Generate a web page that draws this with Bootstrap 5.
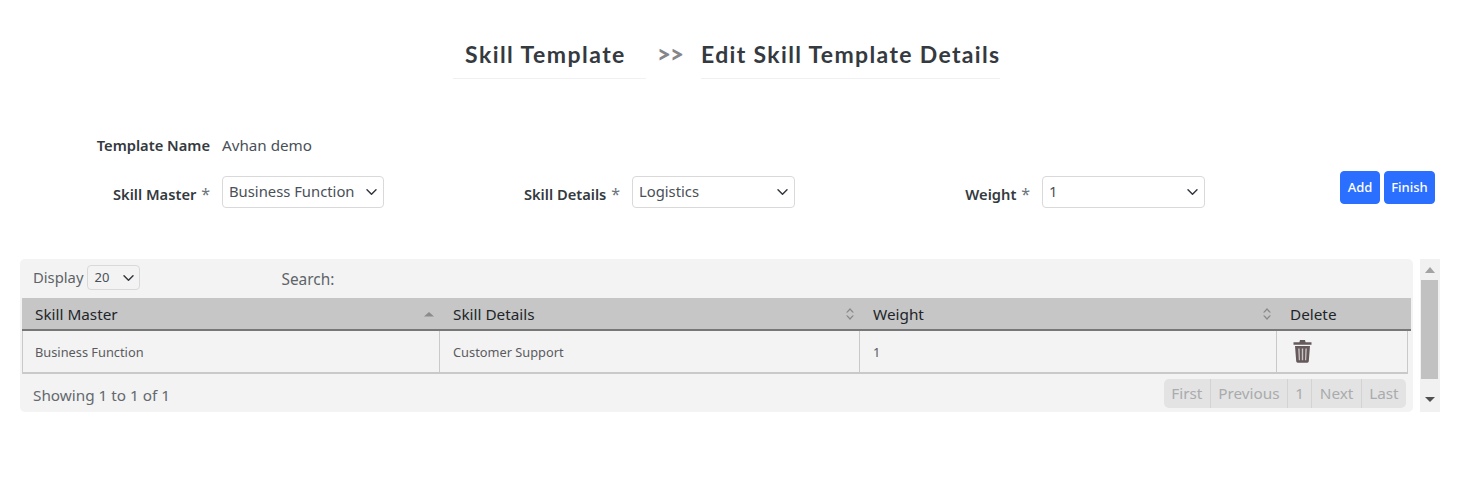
<!DOCTYPE html>
<html lang="en">
<head>
<meta charset="utf-8">
<title>Edit Skill Template Details</title>
<link href="https://cdn.jsdelivr.net/npm/bootstrap@5.3.0/dist/css/bootstrap.min.css" rel="stylesheet">
<style>
html,body{height:485px;overflow:hidden;background:#fff}
body{font-family:"Noto Sans",sans-serif;color:#495057;font-size:14px}
.crumbs{padding-top:37px;height:121px;padding-left:453px}
.crumb{font-family:"Lato",sans-serif;font-weight:700;font-size:23px;letter-spacing:1.34px;color:#343a40;border-bottom:1px solid #f1f1f4;height:42px;line-height:34px;white-space:nowrap}
.crumb-a{width:193px;padding-left:12px;letter-spacing:1.45px}
.crumb-b{width:299px}
.crumb-sep{font-family:"Lato",sans-serif;font-weight:900;font-size:24px;letter-spacing:-1px;color:#85858a;width:55px;padding-left:11px;line-height:34px}
.form-area{padding:8px 0 0 20px;height:138px}
.name-row{height:32px}
.lbl{font-weight:600;font-size:14.7px;color:#343a40;width:190px;text-align:right;white-space:nowrap}
.req{font-weight:400;color:#6c757d;font-size:16px;margin-left:1px}
.val{margin-left:12px;font-size:15.2px;color:#495057}
.fields-row{height:40px;margin-top:15px}
.fld{display:flex;align-items:center}
.fld .lbl{padding-top:4px}
.pick{font-size:14.8px;color:#495057;height:32px;padding:0 24px 2px 6px;border:1px solid #d9d9d9;border-radius:4px;margin-left:12px;background-position:right 4px center;background-size:15px 12px}
.w-a{width:162px}.w-b{width:163px}
.gap-a{width:36px}.gap-b{width:35px}
.lbl-b{width:200px}.lbl-c{width:200px}
.act{margin-left:135px;margin-top:-5px;gap:4px}
.act .btn{font-size:13px;font-weight:500;height:33px;padding:0 6px;border-radius:4px;background:#2a6fff;border-color:#2a6fff;line-height:31px}
.w-add{width:40px}.w-fin{width:51px}
.panel-wrap{padding-left:20px;gap:7px}
.panel{width:1393px;height:153px;background:#f3f3f3;border-radius:5px;padding:0 2px;overflow:hidden}
.topbar{height:39px;color:#5d6368;font-size:14.8px;padding:6px 0 0 11px;line-height:24px}
.mini{font-size:13px;height:25px;width:53px;padding:0 18px 0 6px;border:1px solid #d9d9d9;border-radius:4px;background-color:#f3f3f3;background-position:right 3px center;background-size:15px 12px;margin-left:4px;color:#495057}
.srch{margin-left:141px;padding-top:3px;font-size:15.4px}
.dtable{table-layout:fixed;border-collapse:separate;border-spacing:0;margin:0}
.dhead{width:1389px;background:#c6c6c6;color:#212529;font-size:15.3px}
.dhead th{font-weight:400;height:33px;padding:1px 12px 0 13px;border-bottom:2px solid #77777a;position:relative}
.dbody{width:1386px;font-size:12.8px;color:#5b5b5f}
.dbody td{height:43px;padding:2px 12px 0 13px;border-right:1px solid #c9c9c9;border-bottom:2px solid #c9c9c9;vertical-align:middle}
.dbody td:first-child{border-left:1px solid #c9c9c9;padding-left:12px}
.c1{width:418px}.c2{width:420px}.c3{width:417px}
.sorter{position:absolute;right:5px;top:9px;width:10px;height:14px}
.dhead th:first-child .sorter{right:6px}
.foot{height:38px;padding:5px 5px 0 11px;font-size:15.3px;color:#64696e}
.foot-text{padding-top:5px}
.pgr{height:29px;border-radius:5px;background:#e3e3e3;color:#a9abad;font-size:15.3px;overflow:hidden}
.pgr span{padding:0 7.4px;line-height:29px;border-left:1px solid #d3d3d3}
.pgr span:first-child{border-left:0}
.track{width:20px;height:153px;background:#f1f1f1;padding:0 2px 0 1px}
.arrow{height:21px}
.arrow-low{height:33px;padding-top:8px}
.thumb{height:99px;background:#c1c1c1}
.trash{margin-top:-2px}
</style>
</head>
<body>
<div class="crumbs d-flex">
  <div class="crumb crumb-a">Skill Template</div>
  <div class="crumb-sep">&gt;&gt;</div>
  <div class="crumb crumb-b">Edit Skill Template Details</div>
</div>
<div class="form-area">
  <div class="name-row d-flex align-items-center">
    <div class="lbl">Template Name</div>
    <div class="val">Avhan demo</div>
  </div>
  <div class="fields-row d-flex align-items-start">
    <div class="fld">
      <div class="lbl">Skill Master <span class="req">*</span></div>
      <select class="form-select pick w-a"><option>Business Function</option></select>
    </div>
    <div class="gap-a"></div>
    <div class="fld">
      <div class="lbl lbl-b">Skill Details <span class="req">*</span></div>
      <select class="form-select pick w-b"><option>Logistics</option></select>
    </div>
    <div class="gap-b"></div>
    <div class="fld">
      <div class="lbl lbl-c">Weight <span class="req">*</span></div>
      <select class="form-select pick w-b"><option>1</option></select>
    </div>
    <div class="act d-flex">
      <button type="button" class="btn btn-primary w-add">Add</button>
      <button type="button" class="btn btn-primary w-fin">Finish</button>
    </div>
  </div>
</div>
<div class="panel-wrap d-flex">
  <div class="panel">
    <div class="topbar d-flex align-items-start">
      <span>Display</span>
      <select class="form-select mini"><option>20</option></select>
      <span class="srch">Search:</span>
    </div>
    <table class="dtable dhead">
      <colgroup><col class="c1"><col class="c2"><col class="c3"><col></colgroup>
      <thead><tr>
        <th>Skill Master<svg class="sorter" viewBox="0 0 10 14"><path d="M0 9.500 5 5l5 4.500z" fill="#8b8b8b"/></svg></th>
        <th>Skill Details<svg class="sorter" viewBox="0 0 10 14"><path d="M1 5.500 5 1l4 4.500H7.300L5 3 2.700 5.500zM1 8.500l4 4.500 4-4.500H7.300L5 11 2.700 8.500z" fill="#8a8a8a"/></svg></th>
        <th>Weight<svg class="sorter" viewBox="0 0 10 14"><path d="M1 5.500 5 1l4 4.500H7.300L5 3 2.700 5.500zM1 8.500l4 4.500 4-4.500H7.300L5 11 2.700 8.500z" fill="#8a8a8a"/></svg></th>
        <th>Delete</th>
      </tr></thead>
    </table>
    <table class="dtable dbody">
      <colgroup><col class="c1"><col class="c2"><col class="c3"><col></colgroup>
      <tbody><tr>
        <td>Business Function</td>
        <td>Customer Support</td>
        <td>1</td>
        <td class="py-0 ps-3"><svg width="19" height="24" viewBox="0 0 19 24" class="d-block trash"><path fill="#66595c" d="M7 1h5l.6 2.200h5.900v2.600H.5V3.200h5.900zM2 7h15l-1.200 15.300a1.500 1.500 0 0 1-1.500 1.400H4.700a1.500 1.500 0 0 1-1.500-1.400z"/><path fill="#c9c5c6" d="M5.200 9.500h1.400l.4 11.800H5.800zM8.800 9.500h1.400v11.800H8.800zM12.400 9.500h1.400l-.6 11.800h-1.200z"/></svg></td>
      </tr></tbody>
    </table>
    <div class="foot d-flex justify-content-between align-items-start">
      <span class="foot-text">Showing 1 to 1 of 1</span>
      <div class="pgr d-flex"><span>First</span><span>Previous</span><span>1</span><span>Next</span><span>Last</span></div>
    </div>
  </div>
  <div class="track">
    <div class="arrow d-flex align-items-center justify-content-center"><svg width="10" height="6" viewBox="0 0 10 6"><path d="M5 0l5 6H0z" fill="#a3a3a3"/></svg></div>
    <div class="thumb"></div>
    <div class="arrow-low d-flex align-items-center justify-content-center"><svg width="10" height="5" viewBox="0 0 10 5"><path d="M0 0h10L5 5z" fill="#505050"/></svg></div>
  </div>
</div>
<script src="https://cdn.jsdelivr.net/npm/bootstrap@5.3.0/dist/js/bootstrap.bundle.min.js"></script>
</body>
</html>
